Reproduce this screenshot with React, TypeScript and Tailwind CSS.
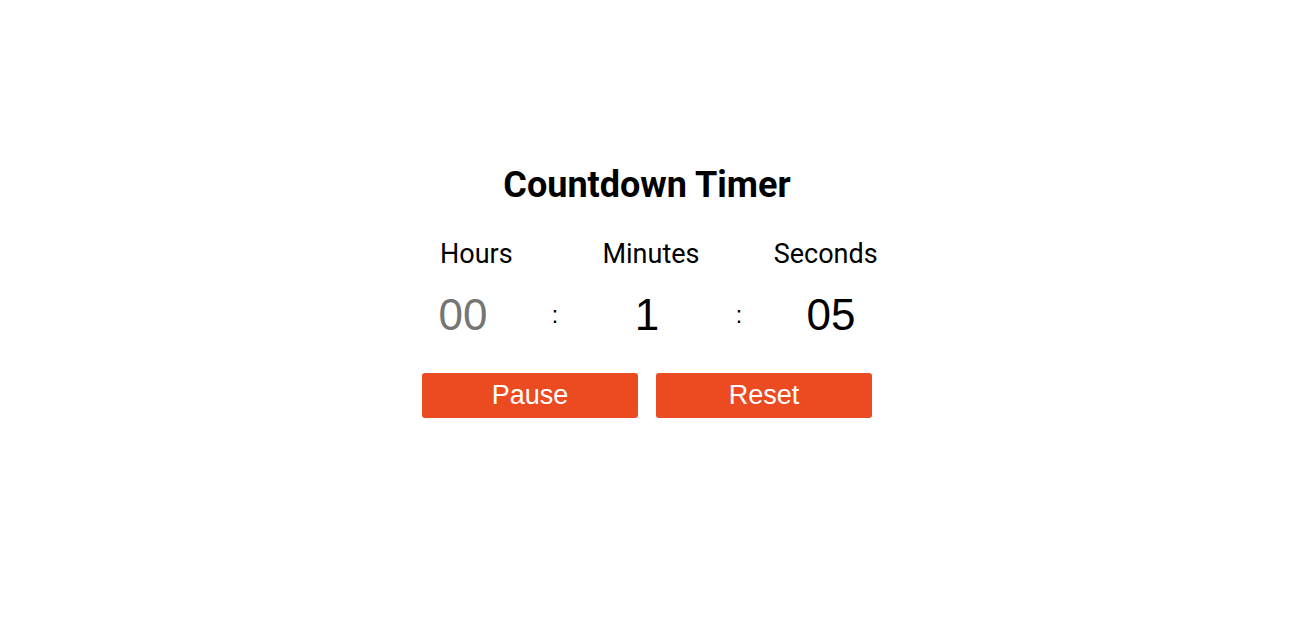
export default function App() {
  // hours / minutes / seconds in the order they are shown
  const parts = [
    { label: "Hours", value: "00", muted: true },
    { label: "Minutes", value: "1", muted: false },
    { label: "Seconds", value: "05", muted: false },
  ];

  return (
    <div className="w-full h-[636px] bg-white flex flex-col items-center pt-[165px]">
      <h1 className="font-['Roboto',sans-serif] font-bold text-[36px] leading-[40px] text-black">
        Countdown Timer
      </h1>

      <div className="mt-[34px] grid grid-cols-3 w-[524px] ml-[8px] font-['Roboto',sans-serif] text-[27px] leading-[30px] text-black">
        {parts.map((p) => (
          <div key={p.label} className="text-center">
            {p.label}
          </div>
        ))}
      </div>

      <div className="mt-[21px] grid grid-cols-5 w-[460px] items-center font-['Liberation_Sans',Arial,sans-serif] text-black">
        <div className="text-center text-[44px] leading-[50px] text-[#757575]">{parts[0].value}</div>
        <div className="text-center text-[23px] leading-[50px]">:</div>
        <div className="text-center text-[44px] leading-[50px]">{parts[1].value}</div>
        <div className="text-center text-[23px] leading-[50px]">:</div>
        <div className="text-center text-[44px] leading-[50px]">{parts[2].value}</div>
      </div>

      <div className="mt-[33px] flex gap-[18px] font-['Liberation_Sans',Arial,sans-serif]">
        <button className="w-[216px] h-[45px] rounded-[3px] bg-[#ec4b22] text-white text-[27px]">
          Pause
        </button>
        <button className="w-[216px] h-[45px] rounded-[3px] bg-[#ec4b22] text-white text-[27px]">
          Reset
        </button>
      </div>
    </div>
  );
}
